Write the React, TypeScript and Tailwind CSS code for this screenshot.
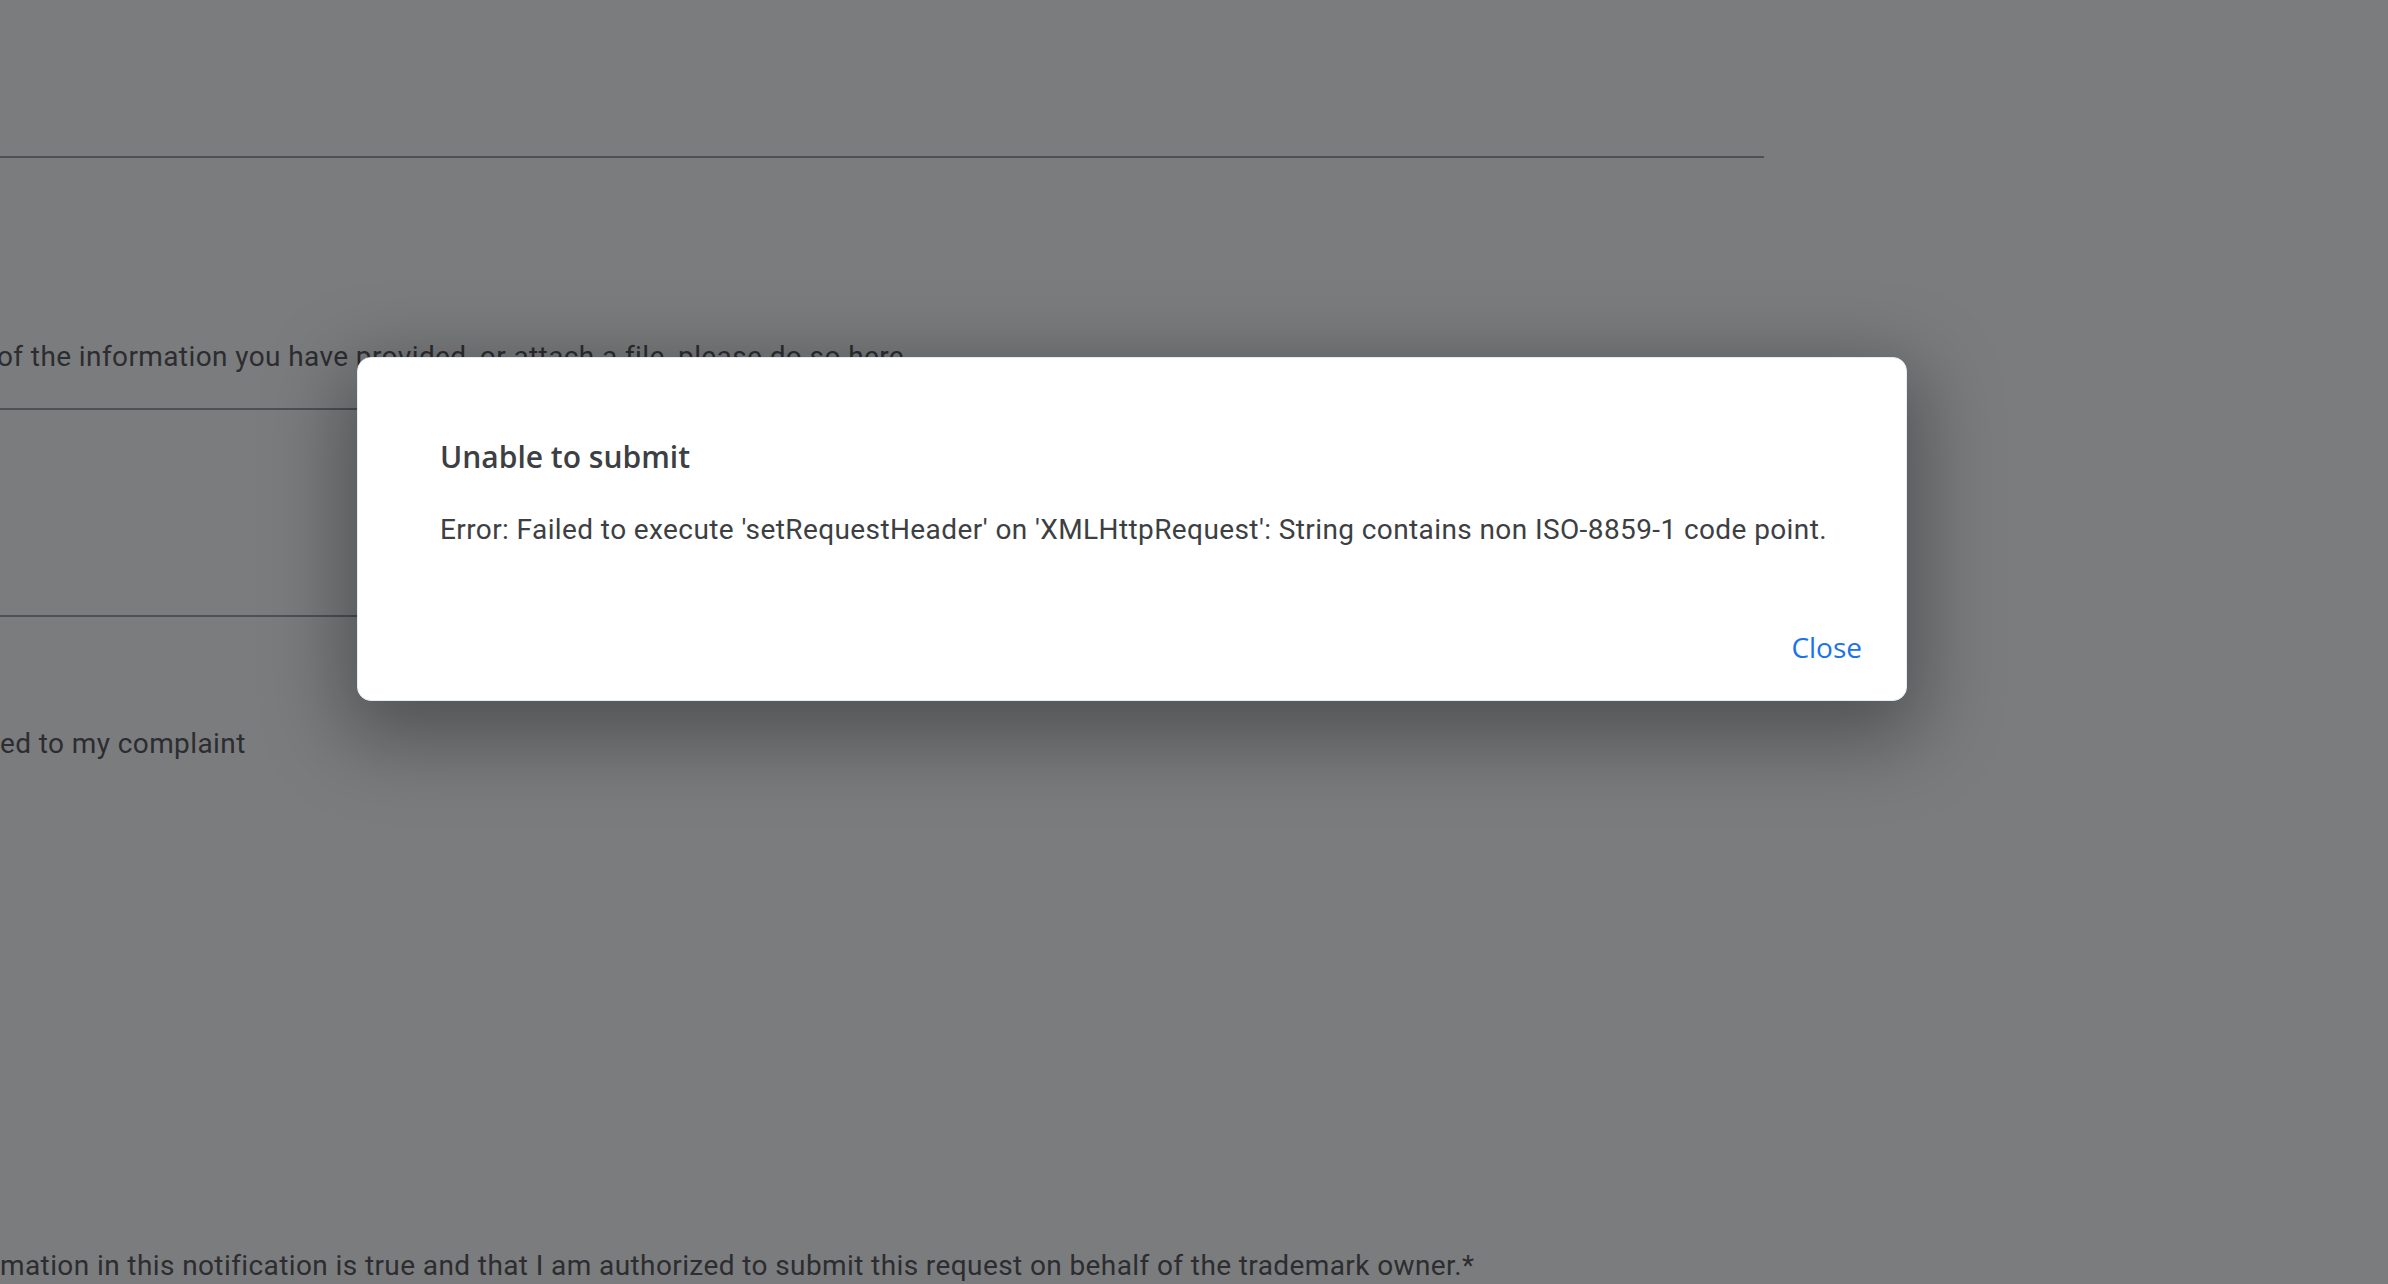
export default function App() {
  return (
    <div className="relative h-[1284px] w-[2388px] overflow-hidden bg-[#7b7c7e] font-['Roboto',sans-serif] text-[#2c2d30]">
      <div className="flex flex-col pt-[156px] text-[28px] leading-[34px] tracking-[0.4px]">
        <div className="h-[2px] w-[1764px] bg-[#4f5054]" />
        <p className="-ml-[3px] mt-[182px] whitespace-nowrap">
          of the information you have provided, or attach a file, please do so here.
        </p>
        <div className="mt-[34px] h-[2px] w-[1764px] bg-[#4f5054]" />
        <div className="mt-[205px] h-[2px] w-[1764px] bg-[#4f5054]" />
        <p className="mt-[110px] whitespace-nowrap">ed to my complaint</p>
        <p className="mt-[488px] whitespace-nowrap">
          mation in this notification is true and that I am authorized to submit this request on behalf of the trademark owner.*
        </p>
      </div>

      <div
        role="dialog"
        className="absolute left-[357px] top-[357px] flex h-[344px] w-[1550px] flex-col rounded-[14px] border border-[#e6ecf7] bg-white pl-[82px] pr-[44px] pt-[81px] shadow-[0_24px_80px_14px_rgba(0,0,0,0.34)]"
      >
        <h2 className="font-['Open_Sans',sans-serif] text-[30px] font-semibold leading-[36px] text-[#3c4043]">
          Unable to submit
        </h2>
        <p className="mt-[38px] whitespace-nowrap text-[28px] leading-[34px] tracking-[0.4px] text-[#3c4043]">
          Error: Failed to execute 'setRequestHeader' on 'XMLHttpRequest': String contains non ISO-8859-1 code point.
        </p>
        <div className="mt-auto flex justify-end pb-[36px]">
          <button className="font-['Open_Sans',sans-serif] text-[28px] font-medium leading-[34px] text-[#1a73e8]">
            Close
          </button>
        </div>
      </div>
    </div>
  )
}
